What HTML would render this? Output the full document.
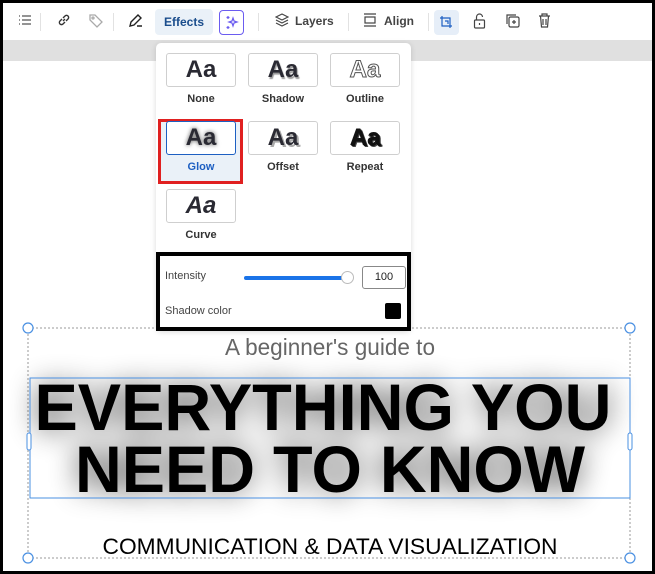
<!DOCTYPE html>
<html><head><style>
*{box-sizing:border-box;margin:0;padding:0}
body{width:655px;height:574px;overflow:hidden;background:#000;font-family:"Liberation Sans",sans-serif;position:relative}
.frame{position:absolute;left:3px;top:3px;width:649px;height:568px;background:#fff;overflow:hidden}
.tb{position:absolute;left:0;top:0;width:649px;height:37px;background:#fff}
.band{position:absolute;left:0;top:37px;width:649px;height:21px;background:#e0e0e0}
.ic{position:absolute;top:10px}
.sep{position:absolute;top:10px;width:1px;height:18px;background:#e2e2e2}
.pop{position:absolute;left:153px;top:40px;width:255px;height:288px;background:#fff;border-radius:5px;box-shadow:0 1px 6px rgba(0,0,0,.15)}
.opt{position:absolute;width:70px;height:34px;border:1px solid #cfcfcf;border-radius:3px;text-align:center;font-weight:bold;font-size:24px;line-height:32px;color:#2a2a33}
.lbl{position:absolute;width:70px;text-align:center;font-size:11px;color:#333;font-weight:bold}
</style></head><body>
<div class="frame">
<div class="tb">
<svg class="ic" style="left:15px" width="14" height="14" viewBox="0 0 14 14" stroke="#555" stroke-width="1.3"><path d="M1 3h1M1 7h1M1 11h1M4 3h9M4 7h9M4 11h9"/></svg>
<div class="sep" style="left:37px"></div>
<svg class="ic" style="left:54px" width="14" height="14" viewBox="0 0 14 14" fill="none" stroke="#333" stroke-width="1.4"><path d="M6 8l2-2M5 6L3 8a2 2 0 003 3l2-2M9 8l2-2a2 2 0 00-3-3L6 5"/></svg>
<svg class="ic" style="left:85px" width="15" height="15" viewBox="0 0 15 15" fill="none" stroke="#aaa" stroke-width="1.3"><path d="M2 2h5l7 7-5 5-7-7z"/><circle cx="5" cy="5" r="1"/></svg>
<div class="sep" style="left:110px"></div>
<svg class="ic" style="left:125px" width="15" height="15" viewBox="0 0 15 15" fill="none" stroke="#222" stroke-width="1.4"><path d="M2 13l1-4 7-7 3 3-7 7zM9 13h5"/></svg>
<div style="position:absolute;left:152px;top:6px;width:58px;height:26px;background:#eaf1f8;border-radius:4px;color:#1a4d8c;font-size:12px;font-weight:bold;line-height:26px;text-align:center">Effects</div>
<div style="position:absolute;left:216px;top:7px;width:25px;height:25px;border:1.5px solid #6b5cf0;border-radius:4px"></div>
<svg class="ic" style="left:221px;top:12px" width="15" height="15" viewBox="0 0 15 15" fill="none" stroke="#6b5cf0" stroke-width="1.2"><path d="M9 3l1 3 3 1-3 1-1 3-1-3-3-1 3-1zM4 1v3M2.5 2.5h3M4 11v3M2.5 12.5h3"/></svg>
<div class="sep" style="left:255px"></div>
<svg class="ic" style="left:272px" width="14" height="14" viewBox="0 0 14 14" fill="none" stroke="#444" stroke-width="1.2"><path d="M7 1l6 3-6 3-6-3zM1 7l6 3 6-3M1 10l6 3 6-3"/></svg>
<div style="position:absolute;left:292px;top:11px;font-size:12px;font-weight:bold;color:#444">Layers</div>
<div class="sep" style="left:345px"></div>
<svg class="ic" style="left:360px" width="14" height="14" viewBox="0 0 14 14" fill="none" stroke="#444" stroke-width="1.2"><path d="M1 1h12M1 13h12"/><rect x="2" y="4" width="10" height="6"/></svg>
<div style="position:absolute;left:381px;top:11px;font-size:12px;font-weight:bold;color:#444">Align</div>
<div class="sep" style="left:425px"></div>
<div style="position:absolute;left:431px;top:7px;width:25px;height:25px;background:#e6eef8;border-radius:4px"></div>
<svg class="ic" style="left:436px;top:12px" width="15" height="15" viewBox="0 0 15 15" fill="none" stroke="#1d5fc2" stroke-width="1.2"><path d="M3 1v10h10M1 3h10v10M6 6h3v3"/></svg>
<svg class="ic" style="left:470px" width="13" height="16" viewBox="0 0 13 16" fill="none" stroke="#444" stroke-width="1.2"><rect x="1.5" y="7" width="10" height="8" rx="1"/><path d="M3.5 7V4a3 3 0 016 0"/><path d="M6.5 10v2"/></svg>
<svg class="ic" style="left:502px" width="15" height="15" viewBox="0 0 15 15" fill="none" stroke="#444" stroke-width="1.2"><rect x="4" y="4" width="10" height="10" rx="1.5"/><path d="M11 2H2v9M9 7v4M7 9h4"/></svg>
<svg class="ic" style="left:535px" width="13" height="15" viewBox="0 0 13 15" fill="none" stroke="#444" stroke-width="1.2"><path d="M1 3h11M4 3V1h5v2M2.5 3l1 11h6l1-11M5 6v6M8 6v6"/></svg>
</div>
<div class="band"></div>

<svg style="position:absolute;left:0;top:0" width="649" height="568">
<defs><filter id="g" x="-20%" y="-60%" width="140%" height="220%"><feGaussianBlur stdDeviation="14"/></filter></defs>
<rect x="25" y="325" width="602" height="230" fill="none" stroke="#999" stroke-dasharray="2 2"/>
<text x="327" y="352" font-family="Liberation Sans" font-size="23" fill="#666" text-anchor="middle" textLength="210" lengthAdjust="spacingAndGlyphs">A beginner's guide to</text>
<g filter="url(#g)" opacity=".7">
<text x="320" y="427" font-family="Liberation Sans" font-weight="bold" font-size="66" text-anchor="middle" textLength="577" lengthAdjust="spacingAndGlyphs">EVERYTHING YOU</text>
<text x="327" y="489" font-family="Liberation Sans" font-weight="bold" font-size="66" text-anchor="middle" textLength="510" lengthAdjust="spacingAndGlyphs">NEED TO KNOW</text>
</g>
<text x="320" y="427" font-family="Liberation Sans" font-weight="bold" font-size="66" text-anchor="middle" textLength="577" lengthAdjust="spacingAndGlyphs">EVERYTHING YOU</text>
<text x="327" y="489" font-family="Liberation Sans" font-weight="bold" font-size="66" text-anchor="middle" textLength="510" lengthAdjust="spacingAndGlyphs">NEED TO KNOW</text>
<rect x="27" y="375" width="600" height="120" fill="none" stroke="#4a90e2" stroke-width="1"/>
<rect x="24" y="430" width="4" height="17" rx="2" fill="#fff" stroke="#4a90e2"/>
<rect x="625" y="430" width="4" height="17" rx="2" fill="#fff" stroke="#4a90e2"/>
<text x="327" y="551" font-family="Liberation Sans" font-size="22" fill="#000" text-anchor="middle" textLength="455" lengthAdjust="spacingAndGlyphs">COMMUNICATION &amp; DATA VISUALIZATION</text>
<g fill="#fff" stroke="#4a90e2" stroke-width="1.2"><circle cx="25" cy="325" r="5"/><circle cx="627" cy="325" r="5"/><circle cx="25" cy="555" r="5"/><circle cx="627" cy="555" r="5"/></g>
</svg>

<div class="pop">
<div class="opt" style="left:10px;top:10px">Aa</div><div class="lbl" style="left:10px;top:50px">None</div>
<div class="opt" style="left:92px;top:10px;text-shadow:1px 2px 1px #999">Aa</div><div class="lbl" style="left:92px;top:50px">Shadow</div>
<div class="opt" style="left:174px;top:10px;color:#fff;-webkit-text-stroke:1px #555">Aa</div><div class="lbl" style="left:174px;top:50px">Outline</div>
<div style="position:absolute;left:2px;top:76px;width:85px;height:65px;border:3px solid #e02020;background:#eaf1f8"></div>
<div class="opt" style="left:10px;top:78px;border-color:#1d5fc2;background:#fff;text-shadow:0 0 4px #555">Aa</div><div class="lbl" style="left:10px;top:118px;color:#1d5fc2">Glow</div>
<div class="opt" style="left:92px;top:78px;text-shadow:2px 2px 0 #aaa">Aa</div><div class="lbl" style="left:92px;top:118px">Offset</div>
<div class="opt" style="left:174px;top:78px;color:#111;text-shadow:1px 1px 0 #111,2px 2px 0 #444">Aa</div><div class="lbl" style="left:174px;top:118px">Repeat</div>
<div class="opt" style="left:10px;top:146px;font-style:italic">Aa</div><div class="lbl" style="left:10px;top:186px">Curve</div>
<div style="position:absolute;left:0;top:209px;width:255px;height:79px;border:4px solid #000;background:#fff">
<div style="position:absolute;left:5px;top:14px;font-size:11px;color:#444">Intensity</div>
<div style="position:absolute;left:84px;top:20px;width:102px;height:4px;background:#1a73e8;border-radius:2px"></div>
<div style="position:absolute;left:181px;top:15px;width:13px;height:13px;border-radius:50%;background:#fff;border:1px solid #bbb"></div>
<div style="position:absolute;left:202px;top:10px;width:44px;height:23px;border:1px solid #888;border-radius:3px;font-size:11px;text-align:center;line-height:21px;color:#222">100</div>
<div style="position:absolute;left:5px;top:49px;font-size:11px;color:#444">Shadow color</div>
<div style="position:absolute;left:225px;top:47px;width:16px;height:16px;background:#000;border-radius:2px"></div>
</div>
</div>
</div>
</body></html>
